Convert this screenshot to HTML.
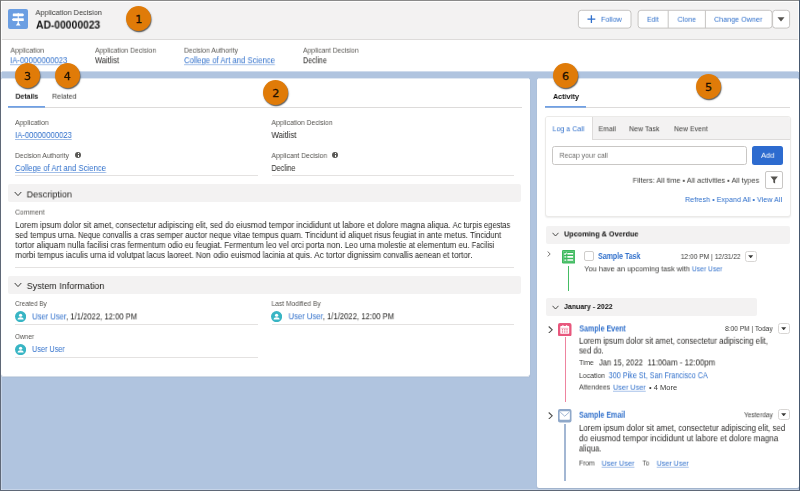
<!DOCTYPE html>
<html><head><meta charset="utf-8"><title>Application Decision</title>
<style>
html,body{margin:0;padding:0}
body{width:800px;height:491px;position:relative;overflow:hidden;background:#b0c4df;font-family:"Liberation Sans",sans-serif}
.a{position:absolute;box-sizing:border-box}
.t{position:absolute;white-space:pre;line-height:1;transform-origin:0 0;will-change:transform}
.card{background:#fff;border-radius:2px;box-shadow:0 1px 1.5px rgba(0,0,0,.10)}
.btn{background:#fff;border:1px solid #c9c7c5;border-radius:2px}
.dd{border-color:#d8d6d4;border-radius:2.5px}
.info{width:5.8px;height:5.8px;border-radius:50%;background:#5a5956}
.info:before{content:"";position:absolute;left:2.4px;top:1px;width:1px;height:1px;background:#fff}
.info:after{content:"";position:absolute;left:2.4px;top:2.5px;width:1px;height:2.2px;background:#fff}
.sec{background:#f3f2f2;border-radius:2px}
.ln{background:#dddbda;height:1px}
.num{position:absolute;width:25px;height:25px;-webkit-text-stroke:0.3px #261500;border-radius:50%;background:#e07b08;box-shadow:0.6px 1.2px 1.2px rgba(40,40,40,.75);color:#1c0f00;font-size:11.2px;line-height:27.4px;text-align:center;font-family:"DejaVu Sans","Liberation Sans",sans-serif}
</style></head><body>
<!-- page header -->
<div class="a" style="left:0;top:0;width:800px;height:39px;background:#f3f2f2"></div>
<div class="a" style="left:0;top:39px;width:800px;height:1px;background:#dddbda"></div>
<div class="a" style="left:0;top:40px;width:800px;height:31px;background:#fff"></div><div class="a" style="left:0;top:71px;width:800px;height:1px;background:rgba(255,255,255,.4)"></div>
<!-- record icon -->
<svg class="a" style="left:8px;top:9px" width="20" height="20" viewBox="0 0 20 20"><rect width="20" height="20" rx="2" fill="#6b9ee2"/><g fill="#fff"><rect x="9.6" y="3.9" width="1.4" height="10" opacity=".75"/><path d="M5.4 4.5h9.6l1.1 1.4-1.1 1.4H5.4a.6.6 0 0 1-.6-.6V5.100a.6.6 0 0 1 .6-.6z"/><path d="M15.200 9.200H5l-1.100 1.400L5 12h10.200a.6.6 0 0 0 .6-.6V9.800a.6.6 0 0 0-.6-.6z"/><path d="M10.200 13.100l2.300 3.300H7.900z"/></g></svg>
<!-- header buttons -->
<svg class="a" style="left:570px;top:5px" width="225" height="28" viewBox="570 5 225 28"><g fill="#fff" stroke="#c6c4c2" stroke-width="1"><rect x="578.4" y="10.300" width="52.600" height="17.800" rx="2.800"/><rect x="638.100" y="10.300" width="134" height="17.800" rx="2.800"/><rect x="772.600" y="10.300" width="17" height="17.800" rx="2.800"/></g><path d="M668.200 10.300v17.800M705.400 10.300v17.800" stroke="#c6c4c2" stroke-width="1"/><path d="M591.400 15.200v7.800M587.500 19.100h7.800" stroke="#2f6fcb" stroke-width="1.300" fill="none"/></svg>
<svg class="a" style="left:777px;top:16.5px" width="8" height="5" viewBox="0 0 8 5"><path d="M.5 .3h7L4 4.6z" fill="#55534f"/></svg>
<!-- left card -->
<div class="a" style="left:2px;top:78px;width:527px;height:1px;background:rgba(255,255,255,.6)"></div><div class="a card" style="left:1px;top:79px;width:529px;height:297px;border-radius:1px 1px 2px 2px"></div><div class="a" style="left:2px;top:376px;width:527px;height:1px;background:rgba(255,255,255,.55)"></div>
<div class="a ln" style="left:8px;top:107px;width:514px"></div>
<svg class="a" style="left:8px;top:105px" width="37" height="4"><path d="M0 1.900h37" stroke="#3f81de" stroke-width="1.400"/></svg>
<div class="a ln" style="left:15px;top:175px;width:242.5px;opacity:.8"></div>
<div class="a ln" style="left:271.5px;top:175px;width:242.5px;opacity:.8"></div>
<div class="a sec" style="left:8px;top:184px;width:513px;height:18px"></div>
<svg class="a" style="left:14px;top:190.5px" width="8" height="6" viewBox="0 0 8 6"><path d="M.7 1l3.3 3.6L7.3 1" stroke="#3a3a38" stroke-width="1" fill="none"/></svg>
<div class="a ln" style="left:15px;top:266.6px;width:499px;opacity:.8"></div>
<div class="a sec" style="left:8px;top:276px;width:513px;height:17.5px"></div>
<svg class="a" style="left:14px;top:282px" width="8" height="6" viewBox="0 0 8 6"><path d="M.7 1l3.3 3.6L7.3 1" stroke="#3a3a38" stroke-width="1" fill="none"/></svg>
<div class="a ln" style="left:15px;top:324.2px;width:242.5px;opacity:.8"></div>
<div class="a ln" style="left:271.5px;top:324.2px;width:242.5px;opacity:.8"></div>
<div class="a ln" style="left:15px;top:357px;width:242.5px;opacity:.8"></div>
<!-- info icons -->
<div class="a info" style="left:75.4px;top:152.1px"></div>
<div class="a info" style="left:332.4px;top:152.1px"></div>
<!-- avatars -->
<svg class="a" style="left:14.8px;top:310.7px" width="11.2" height="11.2" viewBox="0 0 20 20"><circle cx="10" cy="10" r="10" fill="#38b5c4"/><circle cx="10" cy="7.6" r="2.9" fill="#fff"/><path d="M4.6 15.2c0-3 2.4-4.2 5.4-4.2s5.4 1.2 5.4 4.2z" fill="#fff"/></svg>
<svg class="a" style="left:271.3px;top:310.7px" width="11.2" height="11.2" viewBox="0 0 20 20"><circle cx="10" cy="10" r="10" fill="#38b5c4"/><circle cx="10" cy="7.6" r="2.9" fill="#fff"/><path d="M4.6 15.2c0-3 2.4-4.2 5.4-4.2s5.4 1.2 5.4 4.2z" fill="#fff"/></svg>
<svg class="a" style="left:14.8px;top:343.7px" width="11.2" height="11.2" viewBox="0 0 20 20"><circle cx="10" cy="10" r="10" fill="#38b5c4"/><circle cx="10" cy="7.6" r="2.9" fill="#fff"/><path d="M4.6 15.2c0-3 2.4-4.2 5.4-4.2s5.4 1.2 5.4 4.2z" fill="#fff"/></svg>
<!-- right card -->
<div class="a" style="left:538px;top:78px;width:260px;height:1px;background:rgba(255,255,255,.6)"></div><div class="a card" style="left:537px;top:79px;width:261.5px;height:409px;border-radius:1px 1px 2px 2px"></div>
<div class="a ln" style="left:545px;top:107px;width:245px"></div>
<svg class="a" style="left:545px;top:105px" width="41" height="4"><path d="M0 1.900h41" stroke="#3f81de" stroke-width="1.400"/></svg>
<!-- publisher -->
<div class="a" style="left:545px;top:116px;width:245.5px;height:100.5px;border:1px solid #ebeae8;border-radius:3px;background:#fff;box-shadow:0 1px 1.5px rgba(0,0,0,.07)"></div>
<div class="a" style="left:546px;top:117px;width:243.5px;height:22.5px;background:#f3f2f2;border-bottom:1px solid #dddbda;border-radius:2px 2px 0 0"></div>
<div class="a" style="left:546px;top:117px;width:46.5px;height:23px;background:#fff;border-right:1px solid #dddbda;border-radius:2px 0 0 0"></div>
<div class="a" style="left:552.3px;top:146px;width:194.4px;height:18.6px;border:1px solid #c9c7c5;border-radius:2.5px;background:#fff"></div>
<div class="a" style="left:751.6px;top:146px;width:31.4px;height:18.6px;border-radius:2.5px;background:#2d6bcf"></div>
<div class="a btn" style="left:765px;top:171px;width:18px;height:18px"></div>
<svg class="a" style="left:770.1px;top:176.2px" width="8.4" height="8" viewBox="0 0 8 8"><path d="M.3 .5h7.4L4.9 3.9v3.6L3.1 6.4V3.9z" fill="#55534f"/></svg>
<!-- timeline sections -->
<div class="a sec" style="left:546px;top:226px;width:244px;height:17.5px"></div>
<svg class="a" style="left:551.5px;top:232px" width="7" height="5" viewBox="0 0 7 5"><path d="M.5 .8l3 3.2 3-3.2" stroke="#3a3a38" stroke-width=".9" fill="none"/></svg>
<div class="a sec" style="left:546px;top:298px;width:210.5px;height:17.5px"></div>
<svg class="a" style="left:551.5px;top:304.5px" width="7" height="5" viewBox="0 0 7 5"><path d="M.5 .8l3 3.2 3-3.2" stroke="#3a3a38" stroke-width=".9" fill="none"/></svg>
<!-- task -->
<svg class="a" style="left:547.4px;top:250.8px" width="4" height="6" viewBox="0 0 4 6"><path d="M.6 .5l2.6 2.5L.6 5.5" stroke="#55534f" stroke-width=".8" fill="none"/></svg>
<svg class="a" style="left:561.8px;top:250.2px" width="13.4" height="13.4" viewBox="0 0 14 14"><rect width="14" height="14" rx="1.3" fill="#3cb85c"/><rect x="1.5" y="1.5" width="11" height="11" fill="none" stroke="#7fd596" stroke-width=".5"/><g stroke="#fff" fill="none"><path d="M5.6 3.9h6M5.6 7.200h6M5.6 10.500h6" stroke-width="1.7"/><path d="M2.300 3.800l.9.900 1.700-1.900" stroke-width="1.100"/><path d="M2.500 7.200h2M2.500 10.500h2" stroke-width="1.300"/></g></svg>
<div class="a" style="left:567.8px;top:266.2px;width:1.1px;height:25px;background:#45bd64"></div>
<div class="a" style="left:584px;top:251px;width:9.5px;height:9.5px;border:1px solid #cfcdcb;border-radius:2px;background:#fff"></div>
<div class="a btn dd" style="left:745px;top:251px;width:12px;height:11px"></div>
<svg class="a" style="left:748.4px;top:254.8px" width="5.4" height="3.6" viewBox="0 0 8 5"><path d="M.3 .3h7.4L4 4.8z" fill="#3a3a38"/></svg>
<!-- event -->
<svg class="a" style="left:548.2px;top:325.7px" width="5" height="7.6" viewBox="0 0 5 7.6"><path d="M.7 .5l3.500 3.300L.7 7.100" stroke="#4f4f4d" stroke-width="1.050" fill="none"/></svg>
<svg class="a" style="left:558.3px;top:322.6px" width="13.5" height="13.5" viewBox="0 0 14 14"><rect width="14" height="14" rx="2" fill="#e8577d"/><path d="M3.100 3.100h1.300v-.7h1.400v.7h2.400v-.7h1.400v.7h1.300a.7.7 0 0 1 .7.7v6.700a.7.7 0 0 1-.7.7H3.100a.7.7 0 0 1-.7-.7V3.800a.7.7 0 0 1 .7-.7z" fill="#fff"/><path d="M3.300 5.500h7.400" stroke="#e8577d" stroke-width=".6" opacity=".8"/><g fill="#e8577d"><rect x="4" y="6.500" width="1.300" height="1.200"/><rect x="6.350" y="6.500" width="1.300" height="1.200"/><rect x="8.700" y="6.500" width="1.300" height="1.200"/><rect x="4" y="8.700" width="1.300" height="1.200"/><rect x="6.350" y="8.700" width="1.300" height="1.200"/><rect x="8.700" y="8.700" width="1.300" height="1.200"/></g></svg>
<div class="a" style="left:564.5px;top:337.4px;width:1.2px;height:64.6px;background:#ee849f"></div>
<div class="a btn dd" style="left:778px;top:323px;width:12px;height:11px"></div>
<svg class="a" style="left:781.4px;top:326.8px" width="5.4" height="3.6" viewBox="0 0 8 5"><path d="M.3 .3h7.4L4 4.8z" fill="#3a3a38"/></svg>
<!-- email -->
<svg class="a" style="left:548.2px;top:411.9px" width="5" height="7.6" viewBox="0 0 5 7.6"><path d="M.7 .5l3.500 3.300L.7 7.100" stroke="#4f4f4d" stroke-width="1.050" fill="none"/></svg>
<svg class="a" style="left:558.3px;top:409px" width="13.5" height="13.5" viewBox="0 0 14 14"><rect width="14" height="14" rx="2" fill="#8fa8c9"/><rect x="1.700" y="2.300" width="10.600" height="8.800" rx=".8" fill="#fff"/><path d="M2.300 3.200L7 7.500l4.700-4.300" fill="none" stroke="#8fa8c9" stroke-width=".9"/></svg>
<div class="a" style="left:564.3px;top:423.8px;width:1.6px;height:57.4px;background:#a3b7d3"></div>
<div class="a btn dd" style="left:778px;top:409px;width:12px;height:11px"></div>
<svg class="a" style="left:781.4px;top:412.9px" width="5.4" height="3.6" viewBox="0 0 8 5"><path d="M.3 .3h7.4L4 4.8z" fill="#3a3a38"/></svg>
<span class="t" style="left:35px;top:9px;font-size:8px;color:#3a3a38;transform:translate(0.50px,0.00px) scaleX(0.9219);">Application Decision</span>
<span class="t" style="left:36px;top:19px;font-size:10.6px;color:#111;font-weight:bold;transform:translate(0.00px,0.60px) scaleX(0.9732);">AD-00000023</span>
<span class="t" style="left:601px;top:15px;font-size:8.0px;color:#2f6fcb;transform:translate(0.00px,0.80px) scaleX(0.8997);">Follow</span>
<span class="t" style="left:647px;top:15px;font-size:8.0px;color:#2f6fcb;transform:translate(0.00px,0.80px) scaleX(0.8584);">Edit</span>
<span class="t" style="left:677px;top:15px;font-size:8.0px;color:#2f6fcb;transform:translate(0.50px,0.80px) scaleX(0.8857);">Clone</span>
<span class="t" style="left:714px;top:15px;font-size:8.0px;color:#2f6fcb;transform:translate(0.00px,0.80px) scaleX(0.8958);">Change Owner</span>
<span class="t" style="left:10px;top:46px;font-size:7.4px;color:#55534f;transform:translate(0.50px,0.70px) scaleX(0.9294);">Application</span>
<span class="t" style="left:10px;top:56px;font-size:8.6px;color:#2f6fcb;text-decoration:underline;text-decoration-thickness:0.6px;text-underline-offset:1px;text-decoration-color:rgba(47,111,203,.45);transform:translate(0.00px,0.20px) scaleX(0.9016);">IA-00000000023</span>
<span class="t" style="left:95px;top:46px;font-size:7.4px;color:#55534f;transform:translate(0.00px,0.70px) scaleX(0.9181);">Application Decision</span>
<span class="t" style="left:95px;top:56px;font-size:8.6px;color:#1f1e1c;transform:translate(0.00px,0.20px) scaleX(0.8755);">Waitlist</span>
<span class="t" style="left:184px;top:46px;font-size:7.4px;color:#55534f;transform:translate(0.00px,0.70px) scaleX(0.9104);">Decision Authority</span>
<span class="t" style="left:184px;top:56px;font-size:8.6px;color:#2f6fcb;text-decoration:underline;text-decoration-thickness:0.6px;text-underline-offset:1px;text-decoration-color:rgba(47,111,203,.45);transform:translate(0.00px,0.20px) scaleX(0.8973);">College of Art and Science</span>
<span class="t" style="left:303px;top:46px;font-size:7.4px;color:#55534f;transform:translate(0.00px,0.70px) scaleX(0.9145);">Applicant Decision</span>
<span class="t" style="left:303px;top:56px;font-size:8.6px;color:#1f1e1c;transform:translate(0.00px,0.20px) scaleX(0.8310);">Decline</span>
<span class="t" style="left:15px;top:92px;font-size:8.1px;color:#111;font-weight:bold;transform:translate(0.50px,0.70px) scaleX(0.8543);">Details</span>
<span class="t" style="left:52px;top:92px;font-size:8.0px;color:#3a3a38;transform:translate(0.00px,0.70px) scaleX(0.8848);">Related</span>
<span class="t" style="left:553px;top:93px;font-size:8.1px;color:#111;font-weight:bold;transform:translate(0.00px,0.00px) scaleX(0.8878);">Activity</span>
<span class="t" style="left:15px;top:119px;font-size:7.4px;color:#55534f;transform:translate(0.00px,0.00px) scaleX(0.9294);">Application</span>
<span class="t" style="left:15px;top:131px;font-size:8.6px;color:#2f6fcb;text-decoration:underline;text-decoration-thickness:0.6px;text-underline-offset:1px;text-decoration-color:rgba(47,111,203,.45);transform:translate(0.00px,0.00px) scaleX(0.8938);">IA-00000000023</span>
<span class="t" style="left:15px;top:152px;font-size:7.4px;color:#55534f;transform:translate(0.00px,0.00px) scaleX(0.9104);">Decision Authority</span>
<span class="t" style="left:15px;top:164px;font-size:8.6px;color:#2f6fcb;text-decoration:underline;text-decoration-thickness:0.6px;text-underline-offset:1px;text-decoration-color:rgba(47,111,203,.45);transform:translate(0.00px,0.00px) scaleX(0.8973);">College of Art and Science</span>
<span class="t" style="left:271px;top:119px;font-size:7.4px;color:#55534f;transform:translate(0.50px,0.00px) scaleX(0.9181);">Application Decision</span>
<span class="t" style="left:271px;top:131px;font-size:8.6px;color:#1f1e1c;transform:translate(0.50px,0.00px) scaleX(0.9112);">Waitlist</span>
<span class="t" style="left:271px;top:152px;font-size:7.4px;color:#55534f;transform:translate(0.50px,0.00px) scaleX(0.9145);">Applicant Decision</span>
<span class="t" style="left:271px;top:164px;font-size:8.6px;color:#1f1e1c;transform:translate(0.50px,0.00px) scaleX(0.8310);">Decline</span>
<span class="t" style="left:26px;top:189px;font-size:9.85px;color:#1e1d1b;transform:translate(0.60px,0.40px) scaleX(0.9208);">Description</span>
<span class="t" style="left:15px;top:208px;font-size:7.4px;color:#55534f;transform:translate(0.00px,0.60px) scaleX(0.9224);">Comment</span>
<span class="t" style="left:15px;top:221px;font-size:8.6px;color:#1f1e1c;transform:translate(0.30px,0.00px) scaleX(0.9251);">Lorem ipsum dolor sit amet, </span>
<span class="t" style="left:115px;top:221px;font-size:8.6px;color:#1f1e1c;transform:translate(0.60px,0.00px) scaleX(0.9149);">consectetur adipiscing elit, </span>
<span class="t" style="left:210px;top:221px;font-size:8.6px;color:#1f1e1c;transform:translate(0.00px,0.00px) scaleX(0.9259);">sed do </span>
<span class="t" style="left:236px;top:221px;font-size:8.6px;color:#1f1e1c;transform:translate(0.10px,0.00px) scaleX(0.9406);">eiusmod tempor </span>
<span class="t" style="left:296px;top:221px;font-size:8.6px;color:#1f1e1c;transform:translate(0.30px,0.00px) scaleX(0.9527);">incididunt ut labore </span>
<span class="t" style="left:367px;top:221px;font-size:8.6px;color:#1f1e1c;transform:translate(0.30px,0.00px) scaleX(0.9322);">et dolore </span>
<span class="t" style="left:400px;top:221px;font-size:8.6px;color:#1f1e1c;transform:translate(0.70px,0.00px) scaleX(0.9224);">magna aliqua. </span>
<span class="t" style="left:452px;top:221px;font-size:8.6px;color:#1f1e1c;transform:translate(0.70px,0.00px) scaleX(0.8732);">Ac turpis egestas</span>
<span class="t" style="left:15px;top:231px;font-size:8.6px;color:#1f1e1c;transform:translate(0.30px,0.00px) scaleX(0.9115);">sed tempus urna. </span>
<span class="t" style="left:78px;top:231px;font-size:8.6px;color:#1f1e1c;transform:translate(0.00px,0.00px) scaleX(0.8847);">Neque convallis a cras </span>
<span class="t" style="left:156px;top:231px;font-size:8.6px;color:#1f1e1c;transform:translate(0.60px,0.00px) scaleX(0.9212);">semper auctor </span>
<span class="t" style="left:209px;top:231px;font-size:8.6px;color:#1f1e1c;transform:translate(0.40px,0.00px) scaleX(0.9162);">neque vitae </span>
<span class="t" style="left:252px;top:231px;font-size:8.6px;color:#1f1e1c;transform:translate(0.30px,0.00px) scaleX(0.9271);">tempus quam. </span>
<span class="t" style="left:305px;top:231px;font-size:8.6px;color:#1f1e1c;transform:translate(0.00px,0.00px) scaleX(0.9372);">Tincidunt id aliquet </span>
<span class="t" style="left:374px;top:231px;font-size:8.6px;color:#1f1e1c;transform:translate(0.10px,0.00px) scaleX(0.9118);">risus feugiat in </span>
<span class="t" style="left:426px;top:231px;font-size:8.6px;color:#1f1e1c;transform:translate(0.80px,0.00px) scaleX(0.9156);">ante metus. </span>
<span class="t" style="left:470px;top:231px;font-size:8.6px;color:#1f1e1c;transform:translate(0.10px,0.00px) scaleX(0.8930);">Tincidunt</span>
<span class="t" style="left:15px;top:241px;font-size:8.6px;color:#1f1e1c;transform:translate(0.30px,0.00px) scaleX(0.9487);">tortor aliquam nulla </span>
<span class="t" style="left:86px;top:241px;font-size:8.6px;color:#1f1e1c;transform:translate(0.90px,0.00px) scaleX(0.9142);">facilisi cras </span>
<span class="t" style="left:127px;top:241px;font-size:8.6px;color:#1f1e1c;transform:translate(0.50px,0.00px) scaleX(0.9225);">fermentum odio eu </span>
<span class="t" style="left:195px;top:241px;font-size:8.6px;color:#1f1e1c;transform:translate(0.80px,0.00px) scaleX(0.9321);">feugiat. </span>
<span class="t" style="left:224px;top:241px;font-size:8.6px;color:#1f1e1c;transform:translate(0.30px,0.00px) scaleX(0.9002);">Fermentum </span>
<span class="t" style="left:266px;top:241px;font-size:8.6px;color:#1f1e1c;transform:translate(0.00px,0.00px) scaleX(0.9157);">leo vel orci </span>
<span class="t" style="left:305px;top:241px;font-size:8.6px;color:#1f1e1c;transform:translate(0.80px,0.00px) scaleX(0.9492);">porta non. </span>
<span class="t" style="left:344px;top:241px;font-size:8.6px;color:#1f1e1c;transform:translate(0.80px,0.00px) scaleX(0.9021);">Leo urna molestie at </span>
<span class="t" style="left:417px;top:241px;font-size:8.6px;color:#1f1e1c;transform:translate(0.20px,0.00px) scaleX(0.9201);">elementum eu. </span>
<span class="t" style="left:471px;top:241px;font-size:8.6px;color:#1f1e1c;transform:translate(0.70px,0.00px) scaleX(0.8539);">Facilisi</span>
<span class="t" style="left:15px;top:251px;font-size:8.6px;color:#1f1e1c;transform:translate(0.30px,0.00px) scaleX(0.9267);">morbi tempus iaculis </span>
<span class="t" style="left:90px;top:251px;font-size:8.6px;color:#1f1e1c;transform:translate(0.10px,0.00px) scaleX(0.9239);">urna id volutpat </span>
<span class="t" style="left:146px;top:251px;font-size:8.6px;color:#1f1e1c;transform:translate(0.60px,0.00px) scaleX(0.9177);">lacus laoreet. </span>
<span class="t" style="left:195px;top:251px;font-size:8.6px;color:#1f1e1c;transform:translate(0.70px,0.00px) scaleX(0.9541);">Non odio </span>
<span class="t" style="left:230px;top:251px;font-size:8.6px;color:#1f1e1c;transform:translate(0.80px,0.00px) scaleX(0.9148);">euismod </span>
<span class="t" style="left:262px;top:251px;font-size:8.6px;color:#1f1e1c;transform:translate(0.70px,0.00px) scaleX(0.9060);">lacinia at quis. </span>
<span class="t" style="left:314px;top:251px;font-size:8.6px;color:#1f1e1c;transform:translate(0.20px,0.00px) scaleX(0.9495);">Ac tortor </span>
<span class="t" style="left:347px;top:251px;font-size:8.6px;color:#1f1e1c;transform:translate(0.30px,0.00px) scaleX(0.9396);">dignissim </span>
<span class="t" style="left:383px;top:251px;font-size:8.6px;color:#1f1e1c;transform:translate(0.20px,0.00px) scaleX(0.8975);">convallis aenean </span>
<span class="t" style="left:442px;top:251px;font-size:8.6px;color:#1f1e1c;transform:translate(0.80px,0.00px) scaleX(0.9378);">et tortor.</span>
<span class="t" style="left:26px;top:281px;font-size:9.85px;color:#1e1d1b;transform:translate(0.70px,0.00px) scaleX(0.9167);">System Information</span>
<span class="t" style="left:15px;top:300px;font-size:7.4px;color:#55534f;transform:translate(0.00px,0.00px) scaleX(0.8585);">Created By</span>
<span class="t" style="left:32px;top:312px;font-size:8.6px;color:#1f1e1c;transform:translate(0.00px,0.40px) scaleX(0.8911);"><span style="color:#2f6fcb">User User</span><span style="color:#1f1e1c">, 1/1/2022, 12:00 PM</span></span>
<span class="t" style="left:271px;top:300px;font-size:7.4px;color:#55534f;transform:translate(0.50px,0.00px) scaleX(0.9010);">Last Modified By</span>
<span class="t" style="left:288px;top:312px;font-size:8.6px;color:#1f1e1c;transform:translate(0.50px,0.20px) scaleX(0.8954);"><span style="color:#2f6fcb">User User</span><span style="color:#1f1e1c">, 1/1/2022, 12:00 PM</span></span>
<span class="t" style="left:15px;top:333px;font-size:7.4px;color:#55534f;transform:translate(0.00px,0.00px) scaleX(0.8742);">Owner</span>
<span class="t" style="left:32px;top:345px;font-size:8.6px;color:#2f6fcb;transform:translate(0.00px,0.00px) scaleX(0.8502);">User User</span>
<span class="t" style="left:552px;top:125px;font-size:8.0px;color:#2f6fcb;transform:translate(0.50px,0.20px) scaleX(0.8829);">Log a Call</span>
<span class="t" style="left:598px;top:125px;font-size:8.0px;color:#3a3a38;transform:translate(0.50px,0.20px) scaleX(0.8652);">Email</span>
<span class="t" style="left:629px;top:125px;font-size:8.0px;color:#3a3a38;transform:translate(0.00px,0.20px) scaleX(0.8830);">New Task</span>
<span class="t" style="left:674px;top:125px;font-size:8.0px;color:#3a3a38;transform:translate(0.00px,0.20px) scaleX(0.8743);">New Event</span>
<span class="t" style="left:559px;top:151px;font-size:8.0px;color:#6b6a68;transform:translate(0.50px,0.80px) scaleX(0.8761);">Recap your call</span>
<span class="t" style="left:761px;top:151px;font-size:8.0px;color:#fff;transform:translate(0.00px,0.80px) scaleX(0.9430);">Add</span>
<span class="t" style="left:632px;top:176px;font-size:8.0px;color:#3a3a38;transform:translate(0.70px,0.80px) scaleX(0.9189);">Filters: All time • All activities • All types</span>
<span class="t" style="left:685px;top:196px;font-size:8.0px;color:#2f6fcb;transform:translate(0.00px,0.00px) scaleX(0.8968);">Refresh • Expand All • View All</span>
<span class="t" style="left:564px;top:230px;font-size:8.0px;color:#111;font-weight:bold;transform:translate(0.00px,0.40px) scaleX(0.9109);">Upcoming &amp; Overdue</span>
<span class="t" style="left:598px;top:253px;font-size:8.2px;color:#2f6fcb;font-weight:bold;transform:translate(0.00px,0.00px) scaleX(0.8577);">Sample Task</span>
<span class="t" style="left:680px;top:253px;font-size:7.4px;color:#3a3a38;transform:translate(0.70px,0.00px) scaleX(0.9017);">12:00 PM | 12/31/22</span>
<span class="t" style="left:584px;top:265px;font-size:8.0px;color:#3a3a38;transform:translate(0.30px,0.30px) scaleX(0.9220);">You have an upcoming task with</span>
<span class="t" style="left:691px;top:265px;font-size:8.0px;color:#2f6fcb;transform:translate(0.90px,0.30px) scaleX(0.8448);">User User</span>
<span class="t" style="left:564px;top:303px;font-size:8.0px;color:#111;font-weight:bold;transform:translate(0.00px,0.00px) scaleX(0.8728);">January - 2022</span>
<span class="t" style="left:579px;top:325px;font-size:8.2px;color:#2f6fcb;font-weight:bold;transform:translate(0.30px,0.40px) scaleX(0.8653);">Sample Event</span>
<span class="t" style="left:725px;top:325px;font-size:7.4px;color:#3a3a38;transform:translate(0.00px,0.00px) scaleX(0.8959);">8:00 PM | Today</span>
<span class="t" style="left:579px;top:337px;font-size:8.2px;color:#2b2a28;transform:translate(0.00px,0.80px) scaleX(0.9470);">Lorem ipsum dolor sit amet, consectetur adipiscing elit,</span>
<span class="t" style="left:579px;top:347px;font-size:8.2px;color:#2b2a28;transform:translate(0.00px,0.50px) scaleX(0.9217);">sed do.</span>
<span class="t" style="left:579px;top:359px;font-size:7.4px;color:#3a3a38;transform:translate(0.00px,0.00px) scaleX(0.9041);">Time</span>
<span class="t" style="left:599px;top:358px;font-size:8.6px;color:#2b2a28;transform:translate(0.00px,0.40px) scaleX(0.8815);">Jan 15, 2022</span>
<span class="t" style="left:647px;top:358px;font-size:8.6px;color:#2b2a28;transform:translate(0.50px,0.40px) scaleX(0.9155);">11:00am - 12:00pm</span>
<span class="t" style="left:579px;top:372px;font-size:7.4px;color:#3a3a38;transform:translate(0.00px,0.00px) scaleX(0.9342);">Location</span>
<span class="t" style="left:608px;top:371px;font-size:8.6px;color:#2f6fcb;transform:translate(0.70px,0.20px) scaleX(0.8398);">300 Pike St, San Francisco CA</span>
<span class="t" style="left:579px;top:383px;font-size:7.4px;color:#3a3a38;transform:translate(0.00px,0.50px) scaleX(0.9378);">Attendees</span>
<span class="t" style="left:613px;top:383px;font-size:8.0px;color:#2f6fcb;text-decoration:underline;text-decoration-thickness:0.6px;text-underline-offset:1px;text-decoration-color:rgba(47,111,203,.45);transform:translate(0.00px,0.70px) scaleX(0.9081);">User User</span>
<span class="t" style="left:649px;top:383px;font-size:7.4px;color:#3a3a38;transform:translate(0.00px,0.50px) scaleX(1.0170);">• 4 More</span>
<span class="t" style="left:579px;top:411px;font-size:8.2px;color:#2f6fcb;font-weight:bold;transform:translate(0.00px,0.70px) scaleX(0.8684);">Sample Email</span>
<span class="t" style="left:744px;top:411px;font-size:7.4px;color:#3a3a38;transform:translate(0.00px,0.20px) scaleX(0.8814);">Yesterday</span>
<span class="t" style="left:579px;top:423px;font-size:8.6px;color:#2b2a28;transform:translate(0.00px,0.90px) scaleX(0.9146);">Lorem ipsum dolor sit amet, consectetur adipiscing elit, sed</span>
<span class="t" style="left:579px;top:434px;font-size:8.6px;color:#2b2a28;transform:translate(0.00px,0.20px) scaleX(0.9375);">do eiusmod tempor incididunt ut labore et dolore magna</span>
<span class="t" style="left:579px;top:444px;font-size:8.6px;color:#2b2a28;transform:translate(0.00px,0.40px) scaleX(0.8822);">aliqua.</span>
<span class="t" style="left:579px;top:459px;font-size:7.4px;color:#3a3a38;transform:translate(0.00px,0.50px) scaleX(0.9072);">From</span>
<span class="t" style="left:601px;top:459px;font-size:8.0px;color:#2f6fcb;text-decoration:underline;text-decoration-thickness:0.6px;text-underline-offset:1px;text-decoration-color:rgba(47,111,203,.45);transform:translate(0.60px,0.70px) scaleX(0.9108);">User User</span>
<span class="t" style="left:642px;top:459px;font-size:7.4px;color:#3a3a38;transform:translate(0.50px,0.50px) scaleX(0.8448);">To</span>
<span class="t" style="left:656px;top:459px;font-size:8.0px;color:#2f6fcb;text-decoration:underline;text-decoration-thickness:0.6px;text-underline-offset:1px;text-decoration-color:rgba(47,111,203,.45);transform:translate(0.70px,0.70px) scaleX(0.8888);">User User</span>
<!-- annotation markers -->
<div class="num" style="left:126.2px;top:5.8px">1</div>
<div class="num" style="left:263.4px;top:79.6px">2</div>
<div class="num" style="left:15.1px;top:63.1px">3</div>
<div class="num" style="left:54.9px;top:63.1px">4</div>
<div class="num" style="left:696px;top:74px">5</div>
<div class="num" style="left:553px;top:63.1px">6</div>
<!-- outer frame -->
<div class="a" style="left:0;top:1px;width:800px;height:1px;background:rgba(255,255,255,.9)"></div>
<div class="a" style="left:1px;top:1px;width:1px;height:71px;background:rgba(255,255,255,.9)"></div>
<div class="a" style="left:1px;top:72px;width:1px;height:418px;background:rgba(255,255,255,.28)"></div>
<div class="a" style="left:0;top:489px;width:800px;height:1px;background:rgba(255,255,255,.28)"></div>
<div class="a" style="left:0;top:0;width:800px;height:1px;background:#8a8a8a"></div>
<div class="a" style="left:798px;top:1px;width:1px;height:71px;background:rgba(255,255,255,.9)"></div>
<div class="a" style="left:0;top:0;width:1px;height:72px;background:#747474"></div>
<div class="a" style="left:0;top:72px;width:1px;height:419px;background:#5f6877"></div>
<div class="a" style="left:799px;top:0;width:1px;height:491px;background:#46586f"></div>
<div class="a" style="left:0;top:490px;width:800px;height:1px;background:#5f6877"></div>
</body></html>
